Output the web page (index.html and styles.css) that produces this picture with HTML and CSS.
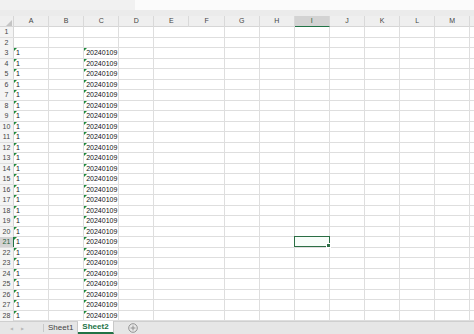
FILE: index.html
```html
<!DOCTYPE html>
<html>
<head>
<meta charset="utf-8">
<link rel="stylesheet" href="styles.css">
</head>
<body>
<div class="app">
  <div class="topbar"><div class="tb-left"></div><div class="tb-right"></div></div>
  <div class="band"></div>
  <div class="colheads">
    <div class="corner"><span class="tri"></span></div>
    <div class="ch">A</div><div class="ch">B</div><div class="ch">C</div><div class="ch">D</div>
    <div class="ch">E</div><div class="ch">F</div><div class="ch">G</div><div class="ch">H</div>
    <div class="ch active">I</div><div class="ch">J</div><div class="ch">K</div><div class="ch">L</div>
    <div class="ch">M</div><div class="ch"></div>
  </div>
  <div class="grid">
    <div class="row"><div class="rh">1</div></div>
    <div class="row"><div class="rh">2</div></div>
    <div class="row"><div class="rh">3</div><div class="c t">1</div><div class="c"></div><div class="c t">20240109</div></div>
    <div class="row"><div class="rh">4</div><div class="c t">1</div><div class="c"></div><div class="c t">20240109</div></div>
    <div class="row"><div class="rh">5</div><div class="c t">1</div><div class="c"></div><div class="c t">20240109</div></div>
    <div class="row"><div class="rh">6</div><div class="c t">1</div><div class="c"></div><div class="c t">20240109</div></div>
    <div class="row"><div class="rh">7</div><div class="c t">1</div><div class="c"></div><div class="c t">20240109</div></div>
    <div class="row"><div class="rh">8</div><div class="c t">1</div><div class="c"></div><div class="c t">20240109</div></div>
    <div class="row"><div class="rh">9</div><div class="c t">1</div><div class="c"></div><div class="c t">20240109</div></div>
    <div class="row"><div class="rh">10</div><div class="c t">1</div><div class="c"></div><div class="c t">20240109</div></div>
    <div class="row"><div class="rh">11</div><div class="c t">1</div><div class="c"></div><div class="c t">20240109</div></div>
    <div class="row"><div class="rh">12</div><div class="c t">1</div><div class="c"></div><div class="c t">20240109</div></div>
    <div class="row"><div class="rh">13</div><div class="c t">1</div><div class="c"></div><div class="c t">20240109</div></div>
    <div class="row"><div class="rh">14</div><div class="c t">1</div><div class="c"></div><div class="c t">20240109</div></div>
    <div class="row"><div class="rh">15</div><div class="c t">1</div><div class="c"></div><div class="c t">20240109</div></div>
    <div class="row"><div class="rh">16</div><div class="c t">1</div><div class="c"></div><div class="c t">20240109</div></div>
    <div class="row"><div class="rh">17</div><div class="c t">1</div><div class="c"></div><div class="c t">20240109</div></div>
    <div class="row"><div class="rh">18</div><div class="c t">1</div><div class="c"></div><div class="c t">20240109</div></div>
    <div class="row"><div class="rh">19</div><div class="c t">1</div><div class="c"></div><div class="c t">20240109</div></div>
    <div class="row"><div class="rh">20</div><div class="c t">1</div><div class="c"></div><div class="c t">20240109</div></div>
    <div class="row"><div class="rh active">21</div><div class="c t">1</div><div class="c"></div><div class="c t">20240109</div><div class="c sel"><span class="handle"></span></div></div>
    <div class="row"><div class="rh">22</div><div class="c t">1</div><div class="c"></div><div class="c t">20240109</div></div>
    <div class="row"><div class="rh">23</div><div class="c t">1</div><div class="c"></div><div class="c t">20240109</div></div>
    <div class="row"><div class="rh">24</div><div class="c t">1</div><div class="c"></div><div class="c t">20240109</div></div>
    <div class="row"><div class="rh">25</div><div class="c t">1</div><div class="c"></div><div class="c t">20240109</div></div>
    <div class="row"><div class="rh">26</div><div class="c t">1</div><div class="c"></div><div class="c t">20240109</div></div>
    <div class="row"><div class="rh">27</div><div class="c t">1</div><div class="c"></div><div class="c t">20240109</div></div>
    <div class="row"><div class="rh">28</div><div class="c t">1</div><div class="c"></div><div class="c t">20240109</div></div>
  </div>
  <div class="tabs">
    <div class="nav"><span class="arr">&#9664;</span><span class="arr">&#9654;</span></div>
    <div class="tab">Sheet1</div>
    <div class="tab on">Sheet2</div>
    <div class="add">
      <svg width="10" height="10" viewBox="0 0 10 10"><circle cx="5" cy="5" r="4.3" fill="none" stroke="#8a8a8a" stroke-width="0.9"/><path d="M5 2.6V7.4M2.6 5H7.4" stroke="#8a8a8a" stroke-width="0.9"/></svg>
    </div>
  </div>
</div>
</body>
</html>
```

FILE: styles.css
```css
html, body {
  margin: 0;
  padding: 0;
  background: #ffffff;
}
body {
  font-family: "Liberation Sans", Arial, sans-serif;
  width: 474px;
  height: 334px;
  overflow: hidden;
}
.app {
  display: flex;
  flex-direction: column;
  width: 474px;
  height: 334px;
  overflow: hidden;
}
.topbar {
  display: flex;
  height: 10px;
}
.tb-left {
  width: 135px;
  background: #f1f1f1;
}
.tb-right {
  flex: 1;
  background: #fbfbfb;
}
.band {
  height: 6px;
  background: #ebebeb;
}
.colheads {
  display: grid;
  grid-template-columns: 14px repeat(14, 35.1px);
  height: 11px;
  background: #efefef;
  border-bottom: 1px solid #d6d6d6;
  box-sizing: border-box;
}
.corner {
  position: relative;
  border-right: 1px solid #d6d6d6;
}
.tri {
  position: absolute;
  right: 1px;
  bottom: 1px;
  width: 0;
  height: 0;
  border-left: 6px solid transparent;
  border-bottom: 6px solid #c4c4c4;
}
.ch {
  font-size: 7px;
  line-height: 10px;
  text-align: center;
  color: #444;
  border-right: 1px solid #d9d9d9;
}
.ch.active {
  background: #d3d3d3;
  border-bottom: 1.5px solid #217346;
  color: #1e5e38;
}
.grid {
  display: flex;
  flex-direction: column;
}
.row {
  display: grid;
  grid-template-columns: 14px repeat(14, 35.1px);
  height: 10.5px;
  box-sizing: border-box;
  border-bottom: 1px solid #dedede;
  background-image: repeating-linear-gradient(90deg, transparent 0, transparent 34.1px, #dedede 34.1px, #dedede 35.1px);
  background-position: 14px 0;
}
.rh {
  font-size: 7px;
  line-height: 10px;
  text-align: center;
  color: #444;
  background: #f4f4f4;
  border-right: 1px solid #d6d6d6;
}
.rh.active {
  background: #d3d3d3;
  border-right: 1.5px solid #217346;
  color: #1e5e38;
}
.c {
  position: relative;
  font-size: 7px;
  line-height: 10px;
  padding-left: 2px;
  color: #111;
  white-space: nowrap;
}
.c.t::before {
  content: "";
  position: absolute;
  left: 0;
  top: 0;
  width: 0;
  height: 0;
  border-top: 3px solid #1e8a3c;
  border-right: 3px solid transparent;
}
.c.sel {
  grid-column: 10;
  margin: -1px 0 0 -1px;
  height: 11px;
  border: 1px solid #2b6e44;
  box-sizing: border-box;
  background: #f7fdf9;
}
.handle {
  position: absolute;
  right: -2px;
  bottom: -2px;
  width: 3px;
  height: 3px;
  background: #2b6e44;
  border: 0.5px solid #fff;
}
.tabs {
  flex: 1;
  display: flex;
  align-items: stretch;
  background: #e6e6e6;
  border-top: 1px solid #cfcfcf;
}
.nav {
  display: flex;
  align-items: center;
  gap: 8px;
  width: 44px;
  padding-left: 10px;
  box-sizing: border-box;
  border-right: 1px solid #c8c8c8;
  margin: 2px 0;
}
.arr {
  font-size: 4px;
  color: #b8b8b8;
}
.tab {
  font-size: 8px;
  line-height: 12px;
  padding: 0 4px;
  color: #444;
  border-right: 1px solid #c8c8c8;
}
.tab.on {
  background: #ffffff;
  color: #217346;
  font-weight: bold;
  border-bottom: 2px solid #217346;
  line-height: 11px;
  padding: 0 4px;
  margin-top: -1px;
}
.add {
  display: flex;
  align-items: center;
  padding-left: 14px;
}
```
